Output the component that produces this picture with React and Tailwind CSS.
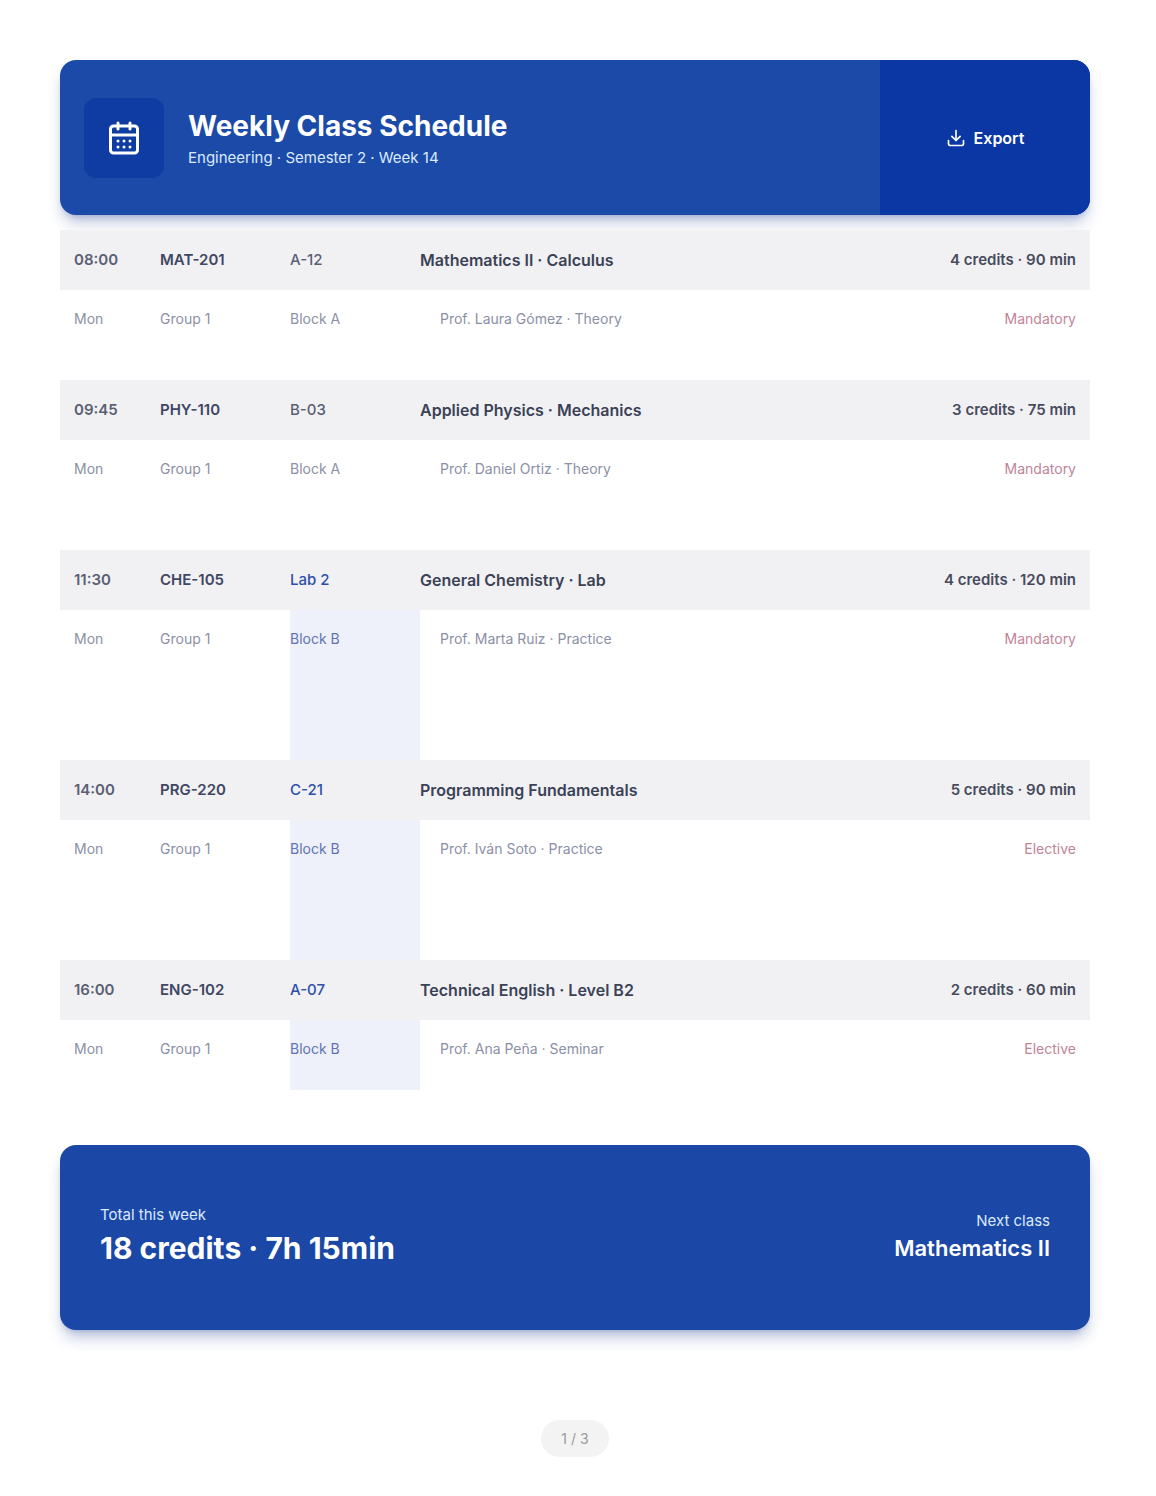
import { CalendarDays, Download } from 'lucide-react';

const rows = [
  { time: '08:00', code: 'MAT-201', room: 'A-12', title: 'Mathematics II · Calculus', sub: 'Prof. Laura Gómez · Theory', amount: '4 credits · 90 min', note: 'Mandatory', h: 'h-[150px]', tint: false },
  { time: '09:45', code: 'PHY-110', room: 'B-03', title: 'Applied Physics · Mechanics', sub: 'Prof. Daniel Ortiz · Theory', amount: '3 credits · 75 min', note: 'Mandatory', h: 'h-[170px]', tint: false },
  { time: '11:30', code: 'CHE-105', room: 'Lab 2', title: 'General Chemistry · Lab', sub: 'Prof. Marta Ruiz · Practice', amount: '4 credits · 120 min', note: 'Mandatory', h: 'h-[210px]', tint: true },
  { time: '14:00', code: 'PRG-220', room: 'C-21', title: 'Programming Fundamentals', sub: 'Prof. Iván Soto · Practice', amount: '5 credits · 90 min', note: 'Elective', h: 'h-[200px]', tint: true },
  { time: '16:00', code: 'ENG-102', room: 'A-07', title: 'Technical English · Level B2', sub: 'Prof. Ana Peña · Seminar', amount: '2 credits · 60 min', note: 'Elective', h: 'h-[130px]', tint: true },
];

function Row({ r }) {
  return (
    <div className={`${r.h} flex flex-col`}>
      <div className="flex items-center h-[60px] bg-[#f1f1f4] px-[14px] text-[15px] text-[#5a5f73]">
        <div className="w-[86px] font-semibold">{r.time}</div>
        <div className="w-[130px] font-semibold text-[#3f4763]">{r.code}</div>
        <div className={`w-[130px] font-medium ${r.tint ? 'text-[#2d4fa8]' : ''}`}>{r.room}</div>
        <div className="flex-1 text-[16px] font-semibold text-[#3c4256]">{r.title}</div>
        <div className="w-[240px] text-right font-semibold text-[#474b5c]">{r.amount}</div>
      </div>
      <div className="flex flex-1 px-[14px] text-[14px] text-[#8b90a6]">
        <div className="w-[86px] pt-[18px]">Mon</div>
        <div className="w-[130px] pt-[18px]">Group 1</div>
        <div className={`w-[130px] pt-[18px] ${r.tint ? 'bg-[#eef1fa] text-[#5f74b3]' : ''}`}>{r.tint ? 'Block B' : 'Block A'}</div>
        <div className="flex-1 pt-[18px] pl-[20px]">{r.sub}</div>
        <div className="w-[240px] pt-[18px] text-right text-[#c0849a]">{r.note}</div>
      </div>
    </div>
  );
}

export default function App() {
  return (
    <div className="min-h-[1496px] bg-white font-['Inter',sans-serif]">
      <div className="ml-[60px] w-[1030px] pt-[60px]">
        <header className="h-[155px] rounded-2xl bg-[#1c4aa8] shadow-lg shadow-blue-900/30 flex items-center overflow-hidden">
          <div className="flex items-center gap-4 px-6 h-full">
            <div className="h-[80px] w-[80px] rounded-xl bg-[#0e3ca3] flex items-center justify-center">
              <CalendarDays className="h-9 w-9 text-white" />
            </div>
          </div>
          <div className="flex-1 text-white">
            <h1 className="text-[28px] font-bold">Weekly Class Schedule</h1>
            <p className="text-[15px] text-blue-100">Engineering · Semester 2 · Week 14</p>
          </div>
          <div className="h-full w-[210px] bg-[#0a37a3] flex items-center justify-center gap-2 text-white text-[16px] font-semibold">
            <Download className="h-5 w-5" />
            Export
          </div>
        </header>

        <div className="mt-[15px]">
          {rows.map((r) => (
            <Row key={r.time} r={r} />
          ))}
        </div>

        <footer className="mt-[55px] h-[185px] rounded-2xl bg-[#1b48a6] shadow-lg shadow-blue-900/30 flex items-center justify-between px-10 text-white">
          <div>
            <p className="text-[15px] text-blue-100">Total this week</p>
            <p className="text-[30px] font-bold">18 credits · 7h 15min</p>
          </div>
          <div className="text-right">
            <p className="text-[15px] text-blue-100">Next class</p>
            <p className="text-[22px] font-semibold">Mathematics II</p>
          </div>
        </footer>

        <div className="mt-[90px] flex justify-center">
          <span className="rounded-full bg-[#f3f3f3] px-5 py-2 text-[14px] text-[#9a9a9a]">1 / 3</span>
        </div>
      </div>
    </div>
  );
}
